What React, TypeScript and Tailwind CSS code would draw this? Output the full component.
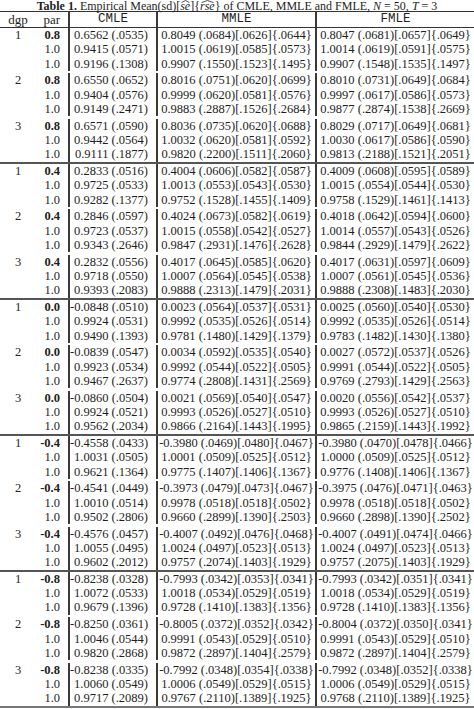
import React from "react";

type Row = [string, string, string, string, string];
type Block = Row[];

const groups: Block[][] = [
  [
    [
      ["1", "0.8", "0.6562 (.0535)", "0.8049 (.0684)[.0626]{.0644}", "0.8047 (.0681)[.0657]{.0649}"],
      ["", "1.0", "0.9415 (.0571)", "1.0015 (.0619)[.0585]{.0573}", "1.0014 (.0619)[.0591]{.0575}"],
      ["", "1.0", "0.9196 (.1308)", "0.9907 (.1550)[.1523]{.1495}", "0.9907 (.1548)[.1535]{.1497}"],
    ],
    [
      ["2", "0.8", "0.6550 (.0652)", "0.8016 (.0751)[.0620]{.0699}", "0.8010 (.0731)[.0649]{.0684}"],
      ["", "1.0", "0.9404 (.0576)", "0.9999 (.0620)[.0581]{.0576}", "0.9997 (.0617)[.0586]{.0573}"],
      ["", "1.0", "0.9149 (.2471)", "0.9883 (.2887)[.1526]{.2684}", "0.9877 (.2874)[.1538]{.2669}"],
    ],
    [
      ["3", "0.8", "0.6571 (.0590)", "0.8036 (.0735)[.0620]{.0688}", "0.8029 (.0717)[.0649]{.0681}"],
      ["", "1.0", "0.9442 (.0564)", "1.0032 (.0620)[.0581]{.0592}", "1.0030 (.0617)[.0586]{.0590}"],
      ["", "1.0", "0.9111 (.1877)", "0.9820 (.2200)[.1511]{.2060}", "0.9813 (.2188)[.1521]{.2051}"],
    ],
  ],
  [
    [
      ["1", "0.4", "0.2833 (.0516)", "0.4004 (.0606)[.0582]{.0587}", "0.4009 (.0608)[.0595]{.0589}"],
      ["", "1.0", "0.9725 (.0533)", "1.0013 (.0553)[.0543]{.0530}", "1.0015 (.0554)[.0544]{.0530}"],
      ["", "1.0", "0.9282 (.1377)", "0.9752 (.1528)[.1455]{.1409}", "0.9758 (.1529)[.1461]{.1413}"],
    ],
    [
      ["2", "0.4", "0.2846 (.0597)", "0.4024 (.0673)[.0582]{.0619}", "0.4018 (.0642)[.0594]{.0600}"],
      ["", "1.0", "0.9723 (.0537)", "1.0015 (.0558)[.0542]{.0527}", "1.0014 (.0557)[.0543]{.0526}"],
      ["", "1.0", "0.9343 (.2646)", "0.9847 (.2931)[.1476]{.2628}", "0.9844 (.2929)[.1479]{.2622}"],
    ],
    [
      ["3", "0.4", "0.2832 (.0556)", "0.4017 (.0645)[.0585]{.0620}", "0.4017 (.0631)[.0597]{.0609}"],
      ["", "1.0", "0.9718 (.0550)", "1.0007 (.0564)[.0545]{.0538}", "1.0007 (.0561)[.0545]{.0536}"],
      ["", "1.0", "0.9393 (.2083)", "0.9888 (.2313)[.1479]{.2031}", "0.9888 (.2308)[.1483]{.2030}"],
    ],
  ],
  [
    [
      ["1", "0.0", "-0.0848 (.0510)", "0.0023 (.0564)[.0537]{.0531}", "0.0025 (.0560)[.0540]{.0530}"],
      ["", "1.0", "0.9924 (.0531)", "0.9992 (.0535)[.0526]{.0514}", "0.9992 (.0535)[.0526]{.0514}"],
      ["", "1.0", "0.9490 (.1393)", "0.9781 (.1480)[.1429]{.1379}", "0.9783 (.1482)[.1430]{.1380}"],
    ],
    [
      ["2", "0.0", "-0.0839 (.0547)", "0.0034 (.0592)[.0535]{.0540}", "0.0027 (.0572)[.0537]{.0526}"],
      ["", "1.0", "0.9923 (.0534)", "0.9992 (.0544)[.0522]{.0505}", "0.9991 (.0544)[.0522]{.0505}"],
      ["", "1.0", "0.9467 (.2637)", "0.9774 (.2808)[.1431]{.2569}", "0.9769 (.2793)[.1429]{.2563}"],
    ],
    [
      ["3", "0.0", "-0.0860 (.0504)", "0.0021 (.0569)[.0540]{.0547}", "0.0020 (.0556)[.0542]{.0537}"],
      ["", "1.0", "0.9924 (.0521)", "0.9993 (.0526)[.0527]{.0510}", "0.9993 (.0526)[.0527]{.0510}"],
      ["", "1.0", "0.9562 (.2034)", "0.9866 (.2164)[.1443]{.1995}", "0.9865 (.2159)[.1443]{.1992}"],
    ],
  ],
  [
    [
      ["1", "-0.4", "-0.4558 (.0433)", "-0.3980 (.0469)[.0480]{.0467}", "-0.3980 (.0470)[.0478]{.0466}"],
      ["", "1.0", "1.0031 (.0505)", "1.0001 (.0509)[.0525]{.0512}", "1.0000 (.0509)[.0525]{.0512}"],
      ["", "1.0", "0.9621 (.1364)", "0.9775 (.1407)[.1406]{.1367}", "0.9776 (.1408)[.1406]{.1367}"],
    ],
    [
      ["2", "-0.4", "-0.4541 (.0449)", "-0.3973 (.0479)[.0473]{.0467}", "-0.3975 (.0476)[.0471]{.0463}"],
      ["", "1.0", "1.0010 (.0514)", "0.9978 (.0518)[.0518]{.0502}", "0.9978 (.0518)[.0518]{.0502}"],
      ["", "1.0", "0.9502 (.2806)", "0.9660 (.2899)[.1390]{.2503}", "0.9660 (.2898)[.1390]{.2502}"],
    ],
    [
      ["3", "-0.4", "-0.4576 (.0457)", "-0.4007 (.0492)[.0476]{.0468}", "-0.4007 (.0491)[.0474]{.0466}"],
      ["", "1.0", "1.0055 (.0495)", "1.0024 (.0497)[.0523]{.0513}", "1.0024 (.0497)[.0523]{.0513}"],
      ["", "1.0", "0.9602 (.2012)", "0.9757 (.2074)[.1403]{.1929}", "0.9757 (.2075)[.1403]{.1929}"],
    ],
  ],
  [
    [
      ["1", "-0.8", "-0.8238 (.0328)", "-0.7993 (.0342)[.0353]{.0341}", "-0.7993 (.0342)[.0351]{.0341}"],
      ["", "1.0", "1.0072 (.0533)", "1.0018 (.0534)[.0529]{.0519}", "1.0018 (.0534)[.0529]{.0519}"],
      ["", "1.0", "0.9679 (.1396)", "0.9728 (.1410)[.1383]{.1356}", "0.9728 (.1410)[.1383]{.1356}"],
    ],
    [
      ["2", "-0.8", "-0.8250 (.0361)", "-0.8005 (.0372)[.0352]{.0342}", "-0.8004 (.0372)[.0350]{.0341}"],
      ["", "1.0", "1.0046 (.0544)", "0.9991 (.0543)[.0529]{.0510}", "0.9991 (.0543)[.0529]{.0510}"],
      ["", "1.0", "0.9820 (.2868)", "0.9872 (.2897)[.1404]{.2579}", "0.9872 (.2897)[.1404]{.2579}"],
    ],
    [
      ["3", "-0.8", "-0.8238 (.0335)", "-0.7992 (.0348)[.0354]{.0338}", "-0.7992 (.0348)[.0352]{.0338}"],
      ["", "1.0", "1.0060 (.0549)", "1.0006 (.0549)[.0529]{.0515}", "1.0006 (.0549)[.0529]{.0515}"],
      ["", "1.0", "0.9717 (.2089)", "0.9767 (.2110)[.1389]{.1925}", "0.9768 (.2110)[.1389]{.1925}"],
    ],
  ],
];

function Hat({ children, w }: { children: React.ReactNode; w: number }) {
  return (
    <span className="relative inline-block italic">
      {children}
      <svg
        className="absolute left-[1px] top-[0px]"
        width={w}
        height={3}
        viewBox={`0 0 ${w} 3`}
      >
        <path d={`M0.5 2.6 L${w / 2} 0.5 L${w - 0.5} 2.6`} stroke="#222" strokeWidth="0.8" fill="none" />
      </svg>
    </span>
  );
}

function BlockView({ block }: { block: Block }) {
  return (
    <div className="flex">
      <div className="w-[36px] flex flex-col">
        {block.map((r, i) => (
          <div key={i} className="h-[14.3px] leading-[14.3px] text-center">{r[0]}</div>
        ))}
      </div>
      <div className="w-[32px] flex flex-col">
        {block.map((r, i) => (
          <div key={i} className={`h-[14.3px] leading-[14.3px] text-right pr-2 ${i === 0 ? "font-bold" : ""}`}>{r[1]}</div>
        ))}
      </div>
      <div className="w-[88px] flex flex-col border-l-2 border-[#3a3a3a]">
        {block.map((r, i) => (
          <div key={i} className="h-[14.3px] leading-[14.3px] text-right pr-2 whitespace-nowrap">{r[2]}</div>
        ))}
      </div>
      <div className="w-[159px] flex flex-col border-l-2 border-[#3a3a3a]">
        {block.map((r, i) => (
          <div key={i} className="h-[14.3px] leading-[14.3px] text-center whitespace-nowrap">{r[3]}</div>
        ))}
      </div>
      <div className="flex-1 flex flex-col border-l-2 border-[#3a3a3a]">
        {block.map((r, i) => (
          <div key={i} className="h-[14.3px] leading-[14.3px] text-center whitespace-nowrap">{r[4]}</div>
        ))}
      </div>
    </div>
  );
}

export default function App() {
  return (
    <div className="w-[474px] h-[709px] overflow-hidden bg-white text-[#1e1e1e] font-['Liberation_Serif',serif] text-[12.5px]">
      <div className="h-[11px] leading-[13px] text-[12px] text-center whitespace-nowrap">
        <span className="font-bold">Table 1.</span> Empirical Mean(sd)[<Hat w={9}>se</Hat>]{"{"}
        <Hat w={13}>rse</Hat>{"}"} of CMLE, MMLE and FMLE, <span className="italic">N</span> = 50,{" "}
        <span className="italic">T</span> = 3
      </div>
      <div className="flex h-[17px] border-t border-b border-[#333] leading-[15px] text-[13px]">
        <div className="w-[36px] text-center">dgp</div>
        <div className="w-[32px] text-right pr-2">par</div>
        <div className="w-[88px] border-l-2 border-[#3a3a3a] text-center font-['Liberation_Mono',monospace] text-[12.5px]">CMLE</div>
        <div className="w-[159px] border-l-2 border-[#3a3a3a] text-center font-['Liberation_Mono',monospace] text-[12.5px]">MMLE</div>
        <div className="flex-1 border-l-2 border-[#3a3a3a] text-center font-['Liberation_Mono',monospace] text-[12.5px]">FMLE</div>
      </div>
      {groups.map((g, gi) => (
        <div key={gi}>
          {gi > 0 && <div className="h-[2.3px] bg-[#555]" />}
          <div className="flex flex-col gap-[2.5px]">
            {g.map((b, bi) => (
              <BlockView key={bi} block={b} />
            ))}
          </div>
        </div>
      ))}
      <div className="h-[2px] bg-[#777]" />
    </div>
  );
}
